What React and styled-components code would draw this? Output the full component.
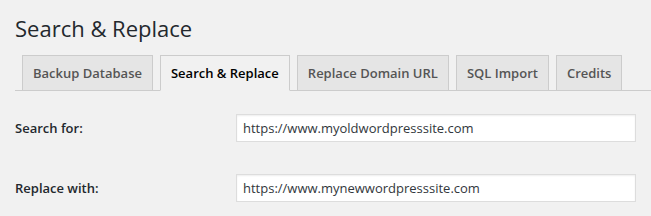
import React from 'react'
import styled, { createGlobalStyle } from 'styled-components'

const GlobalStyle = createGlobalStyle`
  html, body {
    margin: 0;
    padding: 0;
    background: #f1f1f1;
  }
  body {
    font-family: "Open Sans", "Noto Sans", "Liberation Sans", sans-serif;
    color: #23282d;
  }
`

const Wrap = styled.div`
  padding: 0 0 0 15px;
`

const Title = styled.h1`
  margin: 0;
  padding-top: 13px;
  font-size: 22px;
  font-weight: 400;
  line-height: 30px;
  color: #23282d;
`

const TabBar = styled.nav`
  display: flex;
  align-items: flex-end;
  margin-top: 12px;
  border-bottom: 1px solid #ccc;
`

const Tab = styled.a`
  display: block;
  margin-left: 7px;
  padding: 5px 10px;
  font-size: 13px;
  font-weight: 600;
  line-height: 24px;
  white-space: nowrap;
  text-decoration: none;
  border: 1px solid #ccc;
  border-bottom: ${p => (p.$active ? '1px solid #f1f1f1' : 'none')};
  margin-bottom: ${p => (p.$active ? '-1px' : '0')};
  background: ${p => (p.$active ? '#f1f1f1' : '#e5e5e5')};
  color: ${p => (p.$active ? '#000' : '#555')};
`

const Form = styled.div`
  margin-top: 7px;
`

const Row = styled.div`
  display: grid;
  grid-template-columns: 221px 400px;
  align-items: center;
  padding: 15px 0;
`

const Label = styled.label`
  font-size: 13px;
  font-weight: 600;
  line-height: 30px;
  color: #23282d;
`

const Input = styled.input`
  box-sizing: border-box;
  width: 400px;
  height: 28px;
  margin: 1px 0;
  padding: 2px 6px;
  border: 1px solid #ddd;
  background: #fff;
  box-shadow: inset 0 1px 2px rgba(0, 0, 0, 0.07);
  font-family: inherit;
  font-size: 13px;
  color: #32373c;
  outline: none;
`

const tabs = ['Backup Database', 'Search & Replace', 'Replace Domain URL', 'SQL Import', 'Credits']

export default function App() {
  return (
    <>
      <GlobalStyle />
      <Wrap>
        <Title>Search &amp; Replace</Title>
        <TabBar>
          {tabs.map(t => (
            <Tab key={t} href="#" $active={t === 'Search & Replace'}>
              {t}
            </Tab>
          ))}
        </TabBar>
        <Form>
          <Row>
            <Label htmlFor="search">Search for:</Label>
            <Input id="search" type="text" defaultValue="https://www.myoldwordpresssite.com" />
          </Row>
          <Row>
            <Label htmlFor="replace">Replace with:</Label>
            <Input id="replace" type="text" defaultValue="https://www.mynewwordpresssite.com" />
          </Row>
        </Form>
      </Wrap>
    </>
  )
}
